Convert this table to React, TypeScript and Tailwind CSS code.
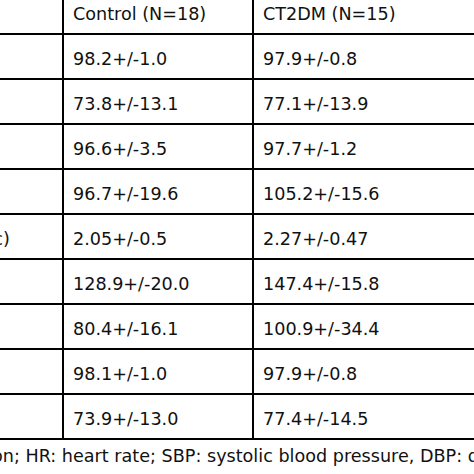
const rows: [string, string, string][] = [
  ["SpO2 (%)", "98.2+/-1.0", "97.9+/-0.8"],
  ["HR (bpm)", "73.8+/-13.1", "77.1+/-13.9"],
  ["SpO2 nadir (%)", "96.6+/-3.5", "97.7+/-1.2"],
  ["Glucose (mg/dL)", "96.7+/-19.6", "105.2+/-15.6"],
  ["HOMA-IR (fasting calc)", "2.05+/-0.5", "2.27+/-0.47"],
  ["SBP (mmHg)", "128.9+/-20.0", "147.4+/-15.8"],
  ["DBP (mmHg)", "80.4+/-16.1", "100.9+/-34.4"],
  ["SpO2 post (%)", "98.1+/-1.0", "97.9+/-0.8"],
  ["HR post (bpm)", "73.9+/-13.0", "77.4+/-14.5"],
];

function Row({ cells }: { cells: [string, string, string] }) {
  return (
    <div className="flex h-[45px] border-b-2 border-black">
      <div className="w-[264px] shrink-0 border-r-2 border-black flex items-center pl-[12px] whitespace-nowrap pt-[6px]">
        {cells[0]}
      </div>
      <div className="w-[190px] shrink-0 border-r-2 border-black flex items-center pl-[9px] whitespace-nowrap pt-[6px]">
        {cells[1]}
      </div>
      <div className="w-[300px] shrink-0 flex items-center pl-[9px] whitespace-nowrap pt-[6px]">
        {cells[2]}
      </div>
    </div>
  );
}

export default function App() {
  return (
    <div
      className="w-[474px] h-[474px] overflow-hidden bg-white text-[17.6px] text-[#111]"
      style={{ fontFamily: '"DejaVu Sans", Verdana, sans-serif' }}
    >
      <div className="-ml-[200px] -mt-[10px]">
        <Row cells={["Parameter", "Control (N=18)", "CT2DM (N=15)"]} />
        {rows.map((r, i) => (
          <Row key={i} cells={r} />
        ))}
        <p className="whitespace-nowrap pt-[3px] -ml-[137px]">
          Abbreviations: SpO2: oxygen saturation; HR: heart rate; SBP: systolic blood pressure, DBP: diastolic blood pressure
        </p>
      </div>
    </div>
  );
}
